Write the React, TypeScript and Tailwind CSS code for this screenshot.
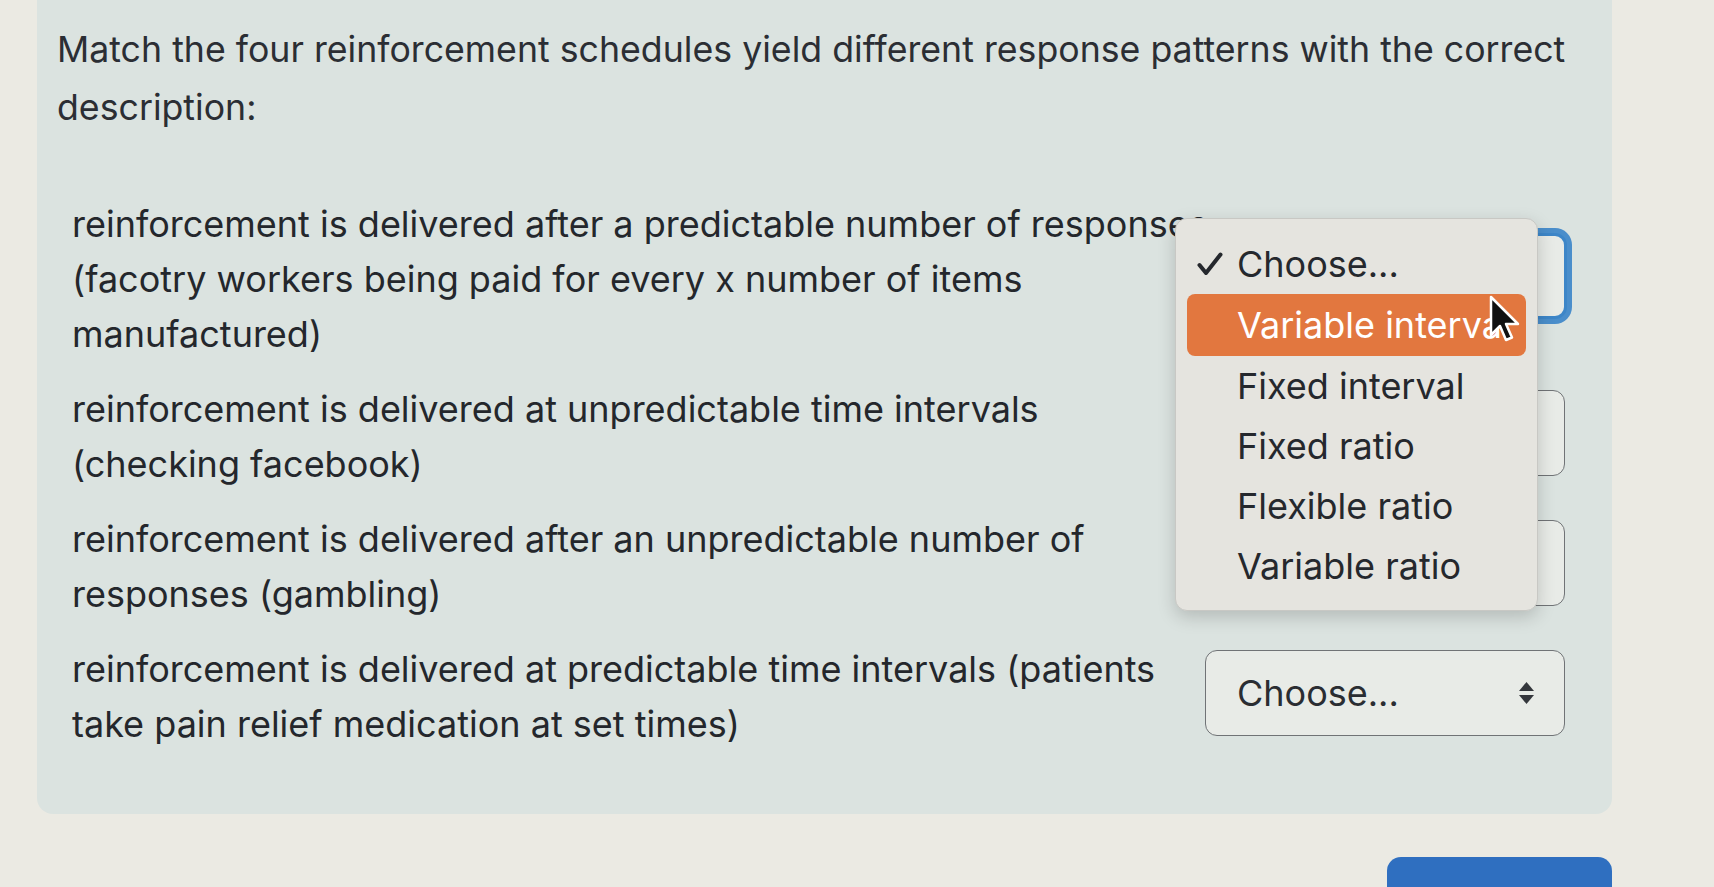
import React from "react";

const Arrows = () => (
  <svg width="17" height="24" viewBox="0 0 17 24" className="shrink-0">
    <path d="M8.5 1 L16 10 L1 10 Z" fill="#34373c" />
    <path d="M1 14 L16 14 L8.5 23 Z" fill="#34373c" />
  </svg>
);

const Cursor = () => (
  <svg width="34" height="50" viewBox="0 0 34 50" className="absolute left-[312px] top-[75px]">
    <path
      d="M3 3 L3 41 L12 32 L18 46 L24 43.5 L18 30 L30 30 Z"
      fill="#111"
      stroke="#fff"
      strokeWidth="2.5"
      strokeLinejoin="round"
    />
  </svg>
);

function Popup() {
  const items = ["Fixed interval", "Fixed ratio", "Flexible ratio", "Variable ratio"];
  return (
    <div className="absolute left-[-33px] top-[-18px] z-10 flex h-[393px] w-[363px] flex-col rounded-[12px] border border-[#c8c8c4] bg-[#e5e4df] px-[11px] pt-[15px] shadow-[0_6px_18px_rgba(0,0,0,0.18)]">
      <div className="relative flex h-[60px] items-center pl-[50px] text-[#25282d]">
        <svg width="28" height="26" viewBox="0 0 28 26" className="absolute left-[9px] top-[17px]">
          <path d="M3.5 14 L10 22 L24.5 3.5" fill="none" stroke="#25282d" strokeWidth="4" strokeLinecap="round" strokeLinejoin="round" />
        </svg>
        Choose...
      </div>
      <div className="relative flex h-[62px] items-center rounded-[8px] bg-[#e2773f] pl-[50px] text-white">
        Variable interval
      </div>
      {items.map((t) => (
        <div key={t} className="flex h-[60px] items-center pl-[50px] text-[#25282d]">
          {t}
        </div>
      ))}
      <Cursor />
    </div>
  );
}

function Select({ focused, open, covered }: { focused?: boolean; open?: boolean; covered?: boolean }) {
  return (
    <div
      className={
        focused
          ? "relative mb-[8px] flex h-[86px] w-[362px] shrink-0 items-center justify-between rounded-[12px] border-[3px] border-[#3d86c8] bg-[#e8ebe7] pl-[30px] pr-[28px] shadow-[0_0_0_5px_#4a8ecb]"
          : "relative mb-[8px] flex h-[86px] w-[360px] shrink-0 items-center justify-between rounded-[12px] border-[1.5px] border-[#707376] bg-[#e8ebe7] pl-[31px] pr-[29px]"
      }
    >
      <span className={covered ? "invisible text-[#2a2d32]" : "text-[#2a2d32]"}>Choose...</span>
      <span className={covered ? "invisible" : ""}>
        <Arrows />
      </span>
      {open && <Popup />}
    </div>
  );
}

function Row({
  lines,
  focused,
  open,
  covered,
}: {
  lines: string[];
  focused?: boolean;
  open?: boolean;
  covered?: boolean;
}) {
  return (
    <div className="flex items-center">
      <div className="w-[1133px] shrink-0 leading-[55px]">
        {lines.map((l) => (
          <div key={l} className="whitespace-nowrap">
            {l}
          </div>
        ))}
      </div>
      <Select focused={focused} open={open} covered={covered} />
    </div>
  );
}

export default function App() {
  return (
    <div className="h-[887px] w-full overflow-hidden bg-[#ebeae3] font-['Inter','Liberation_Sans',sans-serif] text-[36px] text-[#24272c]">
      <div className="ml-[37px] w-[1575px] rounded-b-[16px] bg-[#dbe3e0] pb-[62px] pl-[20px] pt-[20px]">
        <div className="text-[35.7px] leading-[58px] text-[#2b2e34]">
          <div className="whitespace-nowrap">
            Match the four reinforcement schedules yield different response patterns with the correct
          </div>
          <div>description:</div>
        </div>
        <div className="mt-[61px] flex flex-col gap-[20px] pl-[15px]">
          <Row
            focused
            open
            covered
            lines={[
              "reinforcement is delivered after a predictable number of responses",
              "(facotry workers being paid for every x number of items",
              "manufactured)",
            ]}
          />
          <Row
            covered
            lines={[
              "reinforcement is delivered at unpredictable time intervals",
              "(checking facebook)",
            ]}
          />
          <Row
            covered
            lines={[
              "reinforcement is delivered after an unpredictable number of",
              "responses (gambling)",
            ]}
          />
          <Row
            lines={[
              "reinforcement is delivered at predictable time intervals (patients",
              "take pain relief medication at set times)",
            ]}
          />
        </div>
      </div>
      <div className="ml-[1387px] mt-[43px] h-[70px] w-[225px] rounded-[14px] bg-[#2f6fc0]" />
    </div>
  );
}
